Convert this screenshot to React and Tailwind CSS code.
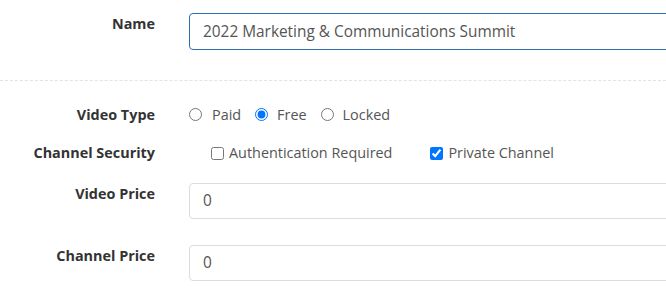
import React from "react";

function Label({ children, className = "" }) {
  return (
    <div className={"w-[155px] shrink-0 text-right text-[14.4px] font-bold leading-[20px] text-[#333] " + className}>
      {children}
    </div>
  );
}

function TextBox({ value, focused }) {
  return (
    <div
      className={
        "ml-[34px] w-[520px] shrink-0 rounded-[4px] border px-[13px] text-[15.4px] text-[#555] flex items-center " +
        (focused ? "h-[37px] border-[#2f6db3]" : "h-[36px] border-[#dcdcdc]")
      }
    >
      {value}
    </div>
  );
}

export default function App() {
  return (
    <div className="w-[666px] h-[297px] overflow-hidden bg-white font-['Open_Sans',sans-serif]">
      <div className="flex pt-[13px]">
        <Label className="pt-px">Name</Label>
        <TextBox value="2022 Marketing & Communications Summit" focused />
      </div>
      <div className="mt-[30px] border-t border-dashed border-[#e3e3e3]" />
      <div className="flex items-center mt-[23px] h-[22px]">
        <Label>Video Type</Label>
        <div className="ml-[34px] flex items-center text-[14.4px] text-[#555]">
          <label className="flex items-center">
            <input type="radio" name="vt" className="m-0 w-[13px] h-[13px]" readOnly />
            <span className="ml-[10px]">Paid</span>
          </label>
          <label className="flex items-center ml-[14px]">
            <input type="radio" name="vt" className="m-0 w-[13px] h-[13px]" defaultChecked />
            <span className="ml-[9px]">Free</span>
          </label>
          <label className="flex items-center ml-[14px]">
            <input type="radio" name="vt" className="m-0 w-[13px] h-[13px]" readOnly />
            <span className="ml-[9px]">Locked</span>
          </label>
        </div>
      </div>
      <div className="flex items-center mt-[17px] h-[20px]">
        <Label>Channel Security</Label>
        <div className="ml-[56px] flex items-center text-[14.4px] text-[#555]">
          <label className="flex items-center">
            <input type="checkbox" className="m-0 w-[13px] h-[13px]" readOnly />
            <span className="ml-[5px]">Authentication Required</span>
          </label>
          <label className="flex items-center ml-[38px]">
            <input type="checkbox" className="m-0 w-[13px] h-[13px]" defaultChecked />
            <span className="ml-[5px]">Private Channel</span>
          </label>
        </div>
      </div>
      <div className="flex mt-[20px]">
        <Label className="pt-px">Video Price</Label>
        <TextBox value="0" />
      </div>
      <div className="flex mt-[26px]">
        <Label className="pt-px">Channel Price</Label>
        <TextBox value="0" />
      </div>
    </div>
  );
}
